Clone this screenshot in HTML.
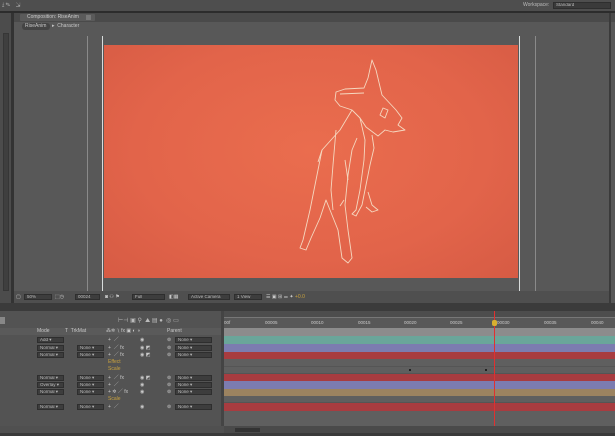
<!DOCTYPE html>
<html><head><meta charset="utf-8"><style>
*{margin:0;padding:0;box-sizing:border-box}
body{width:615px;height:436px;overflow:hidden;background:#585858;font-family:"Liberation Sans",sans-serif;font-size:5px;color:#ccc;position:relative}
div{position:absolute}
.t{white-space:nowrap;font-size:5px;color:#c8c8c8;line-height:6px}
.dd{background:#3d3d3d;border:1px solid #2e2e2e;height:6px;font-size:4.5px;color:#bbb;padding-left:2px;line-height:4px;white-space:nowrap;overflow:hidden}
</style></head><body>
<!-- top bar -->
<div style="left:0;top:0;width:615px;height:11px;background:#4e4e4e"></div>
<div style="left:0;top:11px;width:615px;height:2px;background:#2c2c2c"></div>
<div class="t" style="left:523px;top:2px;color:#bbb">Workspace:</div>
<div class="dd" style="left:553px;top:2px;width:58px;height:7px;background:#3a3a3a">Standard</div>
<div class="t" style="left:2px;top:2px;color:#bbb">⤓ ✎ &nbsp;&nbsp; ⇲</div>
<!-- left narrow panel -->
<div style="left:0;top:13px;width:11px;height:290px;background:#4c4c4c"></div>
<div style="left:3px;top:33px;width:6px;height:258px;background:#3f3f3f;border:1px solid #363636"></div>
<div style="left:11px;top:13px;width:3px;height:290px;background:#333"></div>
<!-- comp panel header -->
<div style="left:14px;top:13px;width:601px;height:9px;background:#4a4a4a"></div>
<div style="left:20px;top:14px;width:75px;height:7px;background:#5a5a5a;border-radius:1px"></div>
<div class="t" style="left:27px;top:14px">Composition: RiseAnim</div>
<div style="left:86px;top:15px;width:5px;height:5px;background:#777"></div>
<div style="left:14px;top:22px;width:595px;height:9px;background:#585858"></div>
<div style="left:22px;top:23px;width:28px;height:7px;background:#444;border-radius:3px"></div>
<div class="t" style="left:25px;top:23px">RiseAnim</div>
<div class="t" style="left:52px;top:23px">▸ &nbsp;Character</div>
<div style="left:609px;top:13px;width:2px;height:290px;background:#3a3a3a"></div>
<!-- viewer -->
<div style="left:87px;top:36px;width:1px;height:256px;background:#8a8a8a"></div>
<div style="left:102px;top:36px;width:1px;height:256px;background:#d8dcdc"></div>
<div style="left:519px;top:36px;width:1px;height:256px;background:#d8dcdc"></div>
<div style="left:535px;top:36px;width:1px;height:256px;background:#8a8a8a"></div>
<div style="left:104px;top:45px;width:414px;height:233px;background:radial-gradient(ellipse at 50% 45%,#ea6d4e 0%,#e2644a 60%,#d65b44 100%)"></div>
<svg style="position:absolute;left:0;top:0" width="615" height="436" fill="none" stroke="#f5d8c0" stroke-width="0.9" stroke-linejoin="round">
<path d="M372 60 L376 70 L382 95 L396 110 L402 118 L398 125 L405 130 L393 132 L385 130 L378 136 L366 127 L360 118 L352 110 L340 106 L335 100 L336 92 L345 89 L364 88 L368 78 Z"/>
<path d="M340 94 L364 93 M352 110 L340 130 L322 150 L316 180 L310 210 L303 240 L300 248 L306 250 L311 238 L320 218 L326 200 L330 210 L338 230 L342 258 L348 263 L352 258 L348 230 L345 205 L348 175 L352 150 L357 138"/>
<path d="M360 118 L365 140 L364 160 L360 190 L356 210 L352 214 L356 216 L362 205 L366 185 L370 165 L374 148 L372 135"/>
<path d="M344 200 L340 206 M345 160 L348 180 M322 150 L318 162 M336 130 L333 165 L331 190 L333 210"/>
<path d="M368 192 L372 205 L378 210 L372 212 L366 207 M383 108 L388 110 L385 118 L380 115 Z"/>
</svg>
<!-- comp bottom toolbar -->
<div style="left:14px;top:291px;width:595px;height:12px;background:#4f4f4f"></div>
<div class="t" style="left:16px;top:294px">▢</div>
<div class="dd" style="left:24px;top:294px;width:28px">50%</div>
<div class="t" style="left:55px;top:294px">⬚◷</div>
<div class="dd" style="left:75px;top:294px;width:25px">00024</div>
<div class="t" style="left:105px;top:294px">◙ ⚇ ⚑</div>
<div class="dd" style="left:132px;top:294px;width:33px">Full</div>
<div class="t" style="left:169px;top:294px">◧▦</div>
<div class="dd" style="left:188px;top:294px;width:42px">Active Camera</div>
<div class="dd" style="left:234px;top:294px;width:28px">1 View</div>
<div class="t" style="left:266px;top:294px">☰ ▣ ⊞ ⚌ ✦ <span style="color:#c9a23e">+0.0</span></div>
<!-- divider -->
<div style="left:0;top:303px;width:615px;height:8px;background:#3b3b3b"></div>
<!-- timeline -->
<div style="left:0;top:311px;width:224px;height:115px;background:#535353"></div>
<div style="left:0;top:317px;width:5px;height:7px;background:#888"></div>
<div class="t" style="left:118px;top:318px;font-size:6px;color:#bbb">⊢⊣ ▣ ⚲ &nbsp;⛰ ▤ ● &nbsp;◎ ▭</div>
<div style="left:0;top:328px;width:224px;height:7px;background:#5a5a5a"></div>
<div class="t" style="left:37px;top:328px">Mode</div>
<div class="t" style="left:65px;top:328px">T &nbsp;TrkMat</div>
<div class="t" style="left:106px;top:328px">⁂✲ ∖ fx ▣ ◐ ◑</div>
<div class="t" style="left:167px;top:328px">Parent</div>
<div style="left:221px;top:311px;width:3px;height:115px;background:#444"></div>
<!-- ruler -->
<div style="left:224px;top:311px;width:391px;height:6px;background:#4d4d4d"></div>
<div style="left:224px;top:317px;width:391px;height:1px;background:#777"></div>
<div style="left:224px;top:318px;width:391px;height:10px;background:#585858"></div>
<div class="t" style="left:224px;top:320px;font-size:4.5px">00f</div>
<div class="t" style="left:265px;top:320px;font-size:4.5px">00005</div>
<div class="t" style="left:311px;top:320px;font-size:4.5px">00010</div>
<div class="t" style="left:358px;top:320px;font-size:4.5px">00015</div>
<div class="t" style="left:404px;top:320px;font-size:4.5px">00020</div>
<div class="t" style="left:450px;top:320px;font-size:4.5px">00025</div>
<div class="t" style="left:497px;top:320px;font-size:4.5px">00030</div>
<div class="t" style="left:544px;top:320px;font-size:4.5px">00035</div>
<div class="t" style="left:591px;top:320px;font-size:4.5px">00040</div>
<div style="left:224px;top:328px;width:391px;height:8px;background:#8c8c8c"></div>
<div style="left:224px;top:336px;width:391px;height:90px;background:#5f5f5f"></div>
<!-- bars -->
<div style="left:224px;top:336px;width:391px;height:8px;background:#6aa69a"></div>
<div style="left:224px;top:344px;width:391px;height:8px;background:#7c7cb0"></div>
<div style="left:224px;top:352px;width:391px;height:7px;background:#a83c40"></div>
<div style="left:224px;top:374px;width:391px;height:7px;background:#a83c40"></div>
<div style="left:224px;top:381px;width:391px;height:8px;background:#7c7cb0"></div>
<div style="left:224px;top:389px;width:391px;height:7px;background:#9c8360"></div>
<div style="left:224px;top:403px;width:391px;height:8px;background:#a83c40"></div>
<div style="left:224px;top:366px;width:391px;height:1px;background:#555"></div>
<div style="left:224px;top:373px;width:391px;height:1px;background:#555"></div>
<div style="left:224px;top:402px;width:391px;height:1px;background:#555"></div>
<div style="left:409px;top:369px;width:2px;height:2px;background:#222"></div>
<div style="left:485px;top:369px;width:2px;height:2px;background:#222"></div>
<div style="left:494px;top:311px;width:1px;height:115px;background:#e03030"></div>
<div style="left:492px;top:320px;width:5px;height:6px;background:#d8b030;border-radius:2px"></div>
<!-- layer rows -->
<div class="dd" style="left:37px;top:337px;width:27px">Add ▾</div>
<div class="dd" style="left:37px;top:345px;width:27px">Normal ▾</div>
<div class="dd" style="left:77px;top:345px;width:27px">None ▾</div>
<div class="dd" style="left:37px;top:352px;width:27px">Normal ▾</div>
<div class="dd" style="left:77px;top:352px;width:27px">None ▾</div>
<div class="t" style="left:108px;top:359px;color:#c9a23e">Effect</div>
<div class="t" style="left:108px;top:366px;color:#c9a23e">Scale</div>
<div class="dd" style="left:37px;top:375px;width:27px">Normal ▾</div>
<div class="dd" style="left:77px;top:375px;width:27px">None ▾</div>
<div class="dd" style="left:37px;top:382px;width:27px">Overlay ▾</div>
<div class="dd" style="left:77px;top:382px;width:27px">None ▾</div>
<div class="dd" style="left:37px;top:389px;width:27px">Normal ▾</div>
<div class="dd" style="left:77px;top:389px;width:27px">None ▾</div>
<div class="t" style="left:108px;top:396px;color:#c9a23e">Scale</div>
<div class="dd" style="left:37px;top:404px;width:27px">Normal ▾</div>
<div class="dd" style="left:77px;top:404px;width:27px">None ▾</div>

<div class="t" style="left:108px;top:337px">+ &nbsp;／</div>
<div class="t" style="left:108px;top:345px">+ &nbsp;／ fx</div>
<div class="t" style="left:108px;top:352px">+ &nbsp;／ fx</div>
<div class="t" style="left:108px;top:375px">+ &nbsp;／ fx</div>
<div class="t" style="left:108px;top:382px">+ &nbsp;／</div>
<div class="t" style="left:108px;top:389px">+ ✲ ／ fx</div>
<div class="t" style="left:108px;top:404px">+ &nbsp;／</div>
<div class="t" style="left:140px;top:337px">◉</div>
<div class="t" style="left:140px;top:345px">◉ ◩</div>
<div class="t" style="left:140px;top:352px">◉ ◩</div>
<div class="t" style="left:140px;top:375px">◉ ◩</div>
<div class="t" style="left:140px;top:382px">◉</div>
<div class="t" style="left:140px;top:389px">◉</div>
<div class="t" style="left:140px;top:404px">◉</div>
<div class="t" style="left:167px;top:337px">⊚</div>
<div class="t" style="left:167px;top:345px">⊚</div>
<div class="t" style="left:167px;top:352px">⊚</div>
<div class="t" style="left:167px;top:375px">⊚</div>
<div class="t" style="left:167px;top:382px">⊚</div>
<div class="t" style="left:167px;top:389px">⊚</div>
<div class="t" style="left:167px;top:404px">⊚</div>
<div class="dd" style="left:175px;top:337px;width:37px">None ▾</div>
<div class="dd" style="left:175px;top:345px;width:37px">None ▾</div>
<div class="dd" style="left:175px;top:352px;width:37px">None ▾</div>
<div class="dd" style="left:175px;top:375px;width:37px">None ▾</div>
<div class="dd" style="left:175px;top:382px;width:37px">None ▾</div>
<div class="dd" style="left:175px;top:389px;width:37px">None ▾</div>
<div class="dd" style="left:175px;top:404px;width:37px">None ▾</div>
<!-- bottom -->
<div style="left:224px;top:426px;width:391px;height:10px;background:#4a4a4a"></div>
<div style="left:235px;top:428px;width:25px;height:4px;background:#333"></div>
<div style="left:0;top:426px;width:224px;height:10px;background:#505050"></div>
<div style="left:0;top:433px;width:615px;height:3px;background:#3a3a3a"></div>
</body></html>
